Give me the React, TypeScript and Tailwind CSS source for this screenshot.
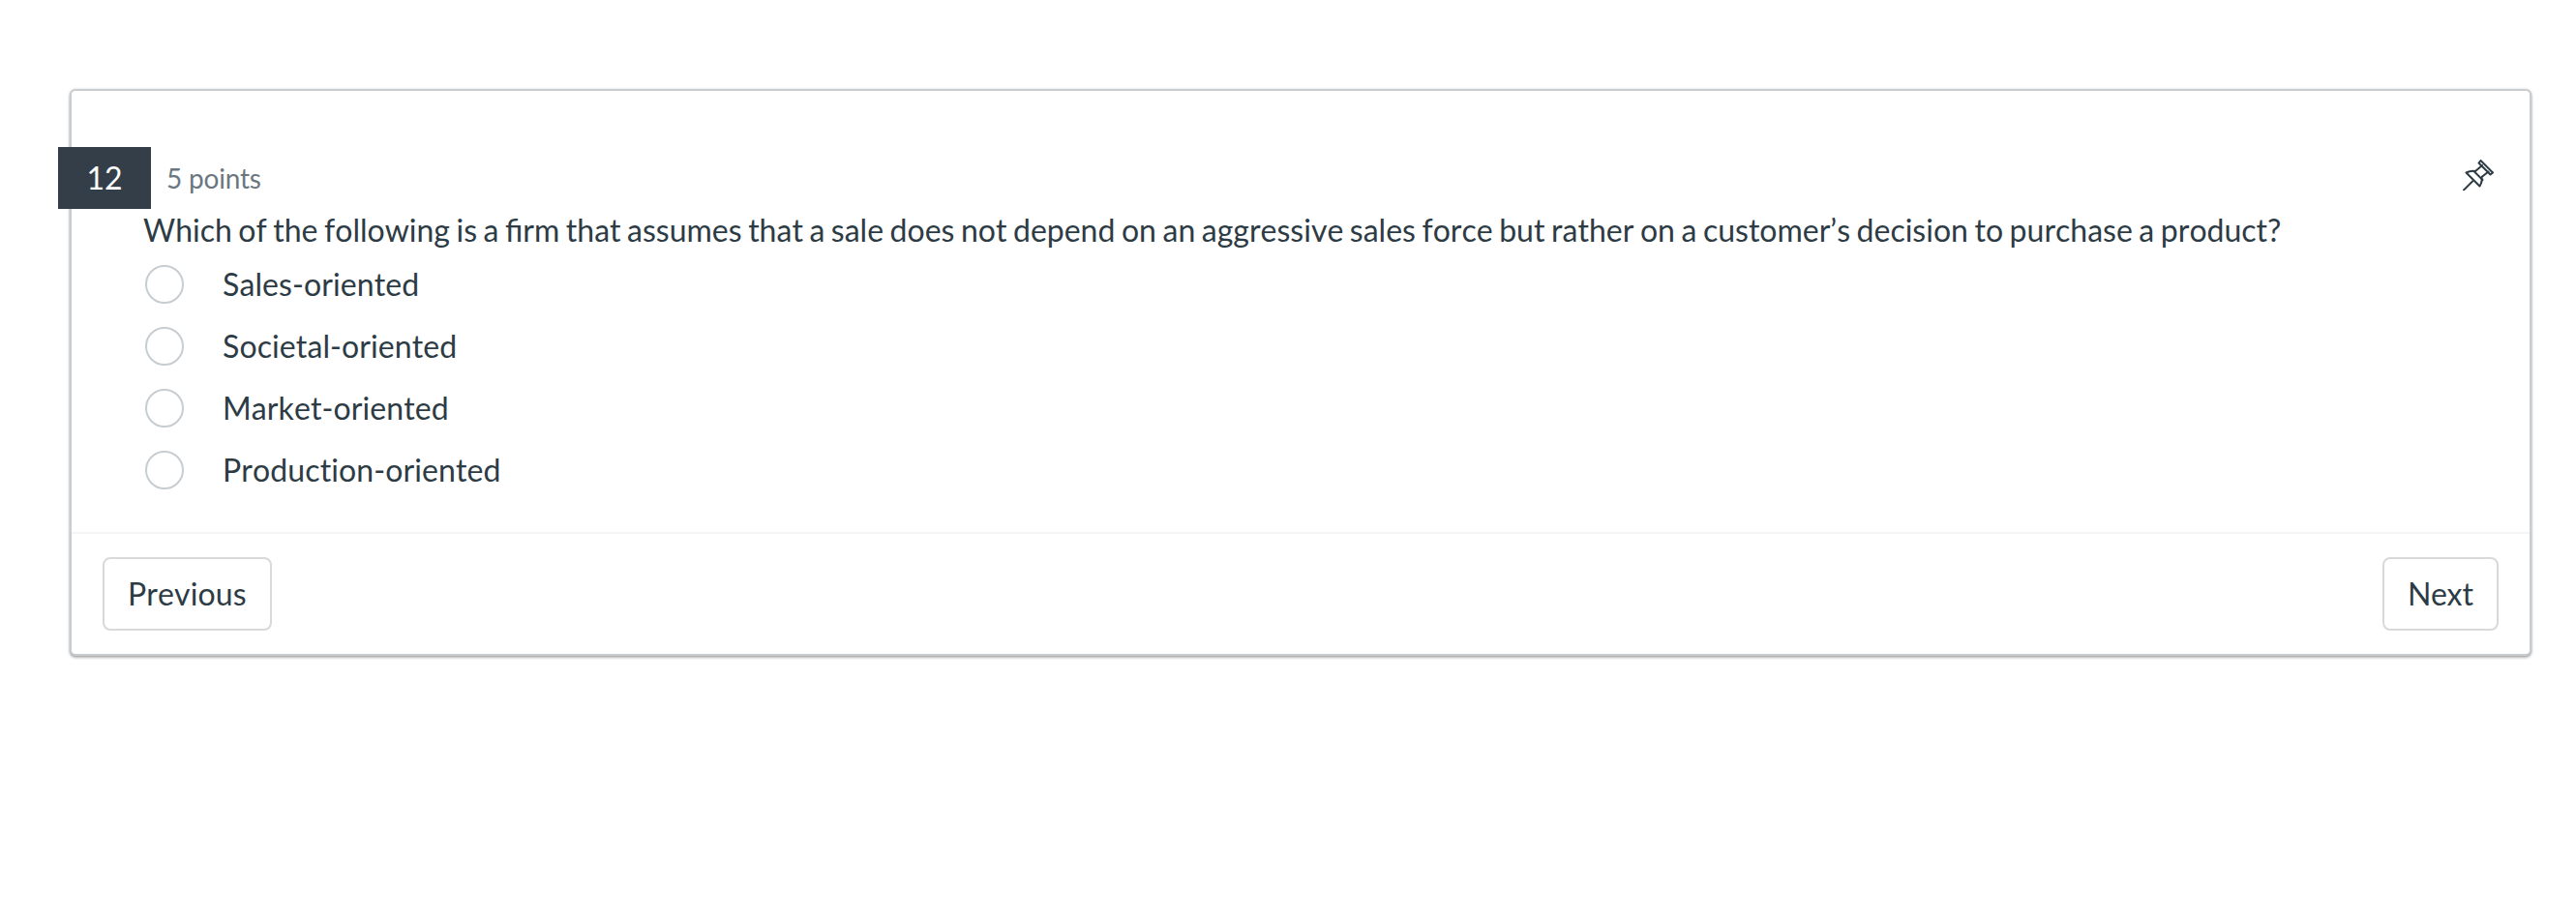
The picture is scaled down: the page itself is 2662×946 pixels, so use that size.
const options = ["Sales-oriented", "Societal-oriented", "Market-oriented", "Production-oriented"];

function PinIcon() {
  return (
    <svg width="32" height="32" viewBox="0 0 32 32" fill="none" stroke="#2d3b45" strokeWidth="2" strokeLinejoin="round" strokeLinecap="round">
      <path d="M1 31.5 L10 22.5" />
      <path d="M18.5 1 L31 13.5 L28.5 15.5 L16.5 3.5 Z" />
      <path d="M20 6 L13 12 Q8.5 11 3.5 13.5 L17.5 27.5 Q20.5 22.5 19.5 18 L26.5 12.5" />
      <path d="M11.5 12 L20.5 21" />
    </svg>
  );
}

export default function App() {
  return (
    <div className="min-h-[946px] bg-white pt-[92px] pl-[72px] pr-[46px] text-[#2d3b45] [font-family:Lato,'Open_Sans',sans-serif]">
      <div className="flex h-[586px] flex-col rounded-[6px] border-2 border-[#c7cdd1] bg-white shadow-[0_2px_3px_rgba(0,0,0,0.3),0_0_2px_rgba(0,0,0,0.2)]">
        <div className="flex flex-1 flex-col pt-[58px]">
          <div className="flex h-[64px] items-center">
            <div className="ml-[-14px] flex h-[64px] w-[96px] items-center justify-center bg-[#333e48] text-[32px] text-white">12</div>
            <div className="ml-[16px] text-[28px] tracking-[-0.2px] text-[#6b7780]">5 points</div>
            <div className="ml-auto mr-[37px] mt-[-7px]"><PinIcon /></div>
          </div>
          <div className="ml-[74px] text-[32px] leading-[44px] [font-kerning:none] [word-spacing:-1.65px]">Which of the following is a firm that assumes that a sale does not depend on an aggressive sales force but rather on a customer’s decision to purchase a product?</div>
          <div className="mt-[2px] flex flex-col">
            {options.map((o) => (
              <div key={o} className="flex h-[64px] items-center">
                <div className="ml-[76px] h-[40px] w-[40px] rounded-full border-2 border-[#c7cdd1] bg-white" />
                <div className="ml-[40px] text-[32px] tracking-[0.1px] [font-kerning:none] [font-variant-ligatures:none]">{o}</div>
              </div>
            ))}
          </div>
        </div>
        <div className="flex h-[126px] items-center justify-between border-t-2 border-[#f5f5f5] px-[32px]">
          <button className="h-[76px] rounded-[8px] border-2 border-[#d9d9d9] bg-white px-[24px] text-[32px] tracking-[0.1px] [font-kerning:none] text-[#2d3b45]">Previous</button>
          <button className="h-[76px] rounded-[8px] border-2 border-[#d9d9d9] bg-white px-[24px] text-[32px] text-[#2d3b45]">Next</button>
        </div>
      </div>
    </div>
  );
}
